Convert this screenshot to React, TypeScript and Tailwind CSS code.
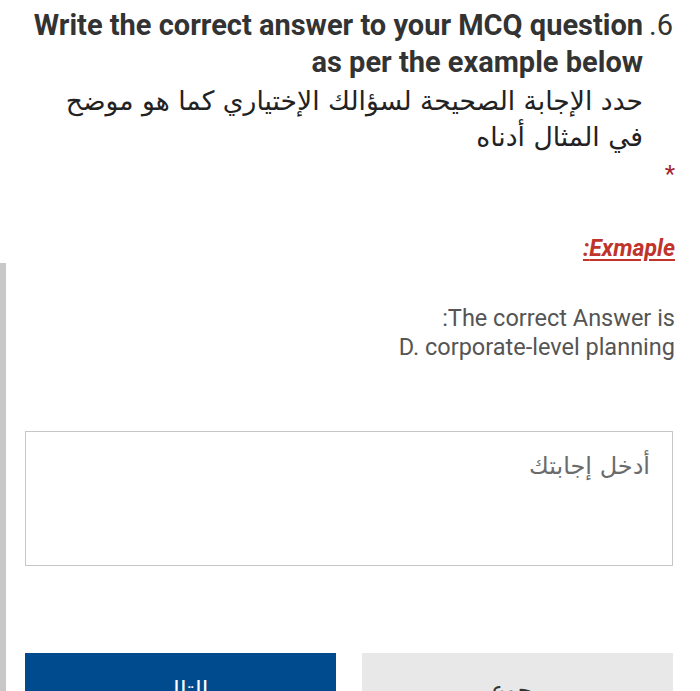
export default function App() {
  return (
    <div className="h-[691px] w-[700px] overflow-hidden bg-white font-['Roboto',sans-serif]">
      <div dir="rtl" className="flex items-start gap-[6px] pr-[27px] pt-[7px]">
        <span dir="ltr" className="text-[29px] leading-[37px] text-[#333]">.6</span>
        <div className="flex flex-col">
          <p className="text-[29px] font-bold leading-[37px] text-[#333]">Write the correct answer to your MCQ question</p>
          <p className="text-[29px] font-bold leading-[37px] text-[#333]">as per the example below</p>
          <p className="mt-[2px] font-['DejaVu_Sans',sans-serif] text-[26.6px] leading-[36px] text-[#222]">
            حدد الإجابة الصحيحة لسؤالك الإختياري كما هو موضح
          </p>
          <p className="font-['DejaVu_Sans',sans-serif] text-[26.6px] leading-[36px] text-[#222]">في المثال أدناه</p>
        </div>
      </div>
      <div dir="rtl" className="mt-[5px] pr-[25px] text-[24px] leading-[28px] text-[#a4262c]">*</div>

      <div dir="rtl" className="mt-[49px] pr-[25px] leading-[24px]">
        <span className="text-[23px] font-bold italic text-[#c0342b] underline underline-offset-[3px]">Exmaple:</span>
      </div>

      <div className="border-l-[6px] border-[#c8c8c8]">
        <div dir="rtl" className="flex flex-col pr-[25px] pt-[41px] text-[23.5px] leading-[29px] text-[#555]">
          <p>The correct Answer is:</p>
          <p dir="ltr" className="text-right">D. corporate-level planning</p>
        </div>

        <div className="mt-[69px] pl-[19px] pr-[27px]">
          <textarea
            dir="rtl"
            placeholder="أدخل إجابتك"
            className="block h-[135px] w-full resize-none border border-[#c6c6c6] px-[22px] pt-[18px] font-['DejaVu_Sans',sans-serif] text-[24px] leading-[32px] outline-none placeholder:text-[#6b6b6b]"
          />
        </div>

        <div dir="rtl" className="mt-[87px] flex gap-[26px] pl-[19px] pr-[27px]">
          <button className="flex h-[74px] flex-1 items-center justify-center bg-[#e8e8e8] font-['DejaVu_Sans',sans-serif] text-[24px] text-[#333]">
            رجوع
          </button>
          <button className="flex h-[74px] flex-1 items-center justify-center bg-[#004b8d] font-['DejaVu_Sans',sans-serif] text-[24px] text-white">
            التالي
          </button>
        </div>
      </div>
    </div>
  )
}
